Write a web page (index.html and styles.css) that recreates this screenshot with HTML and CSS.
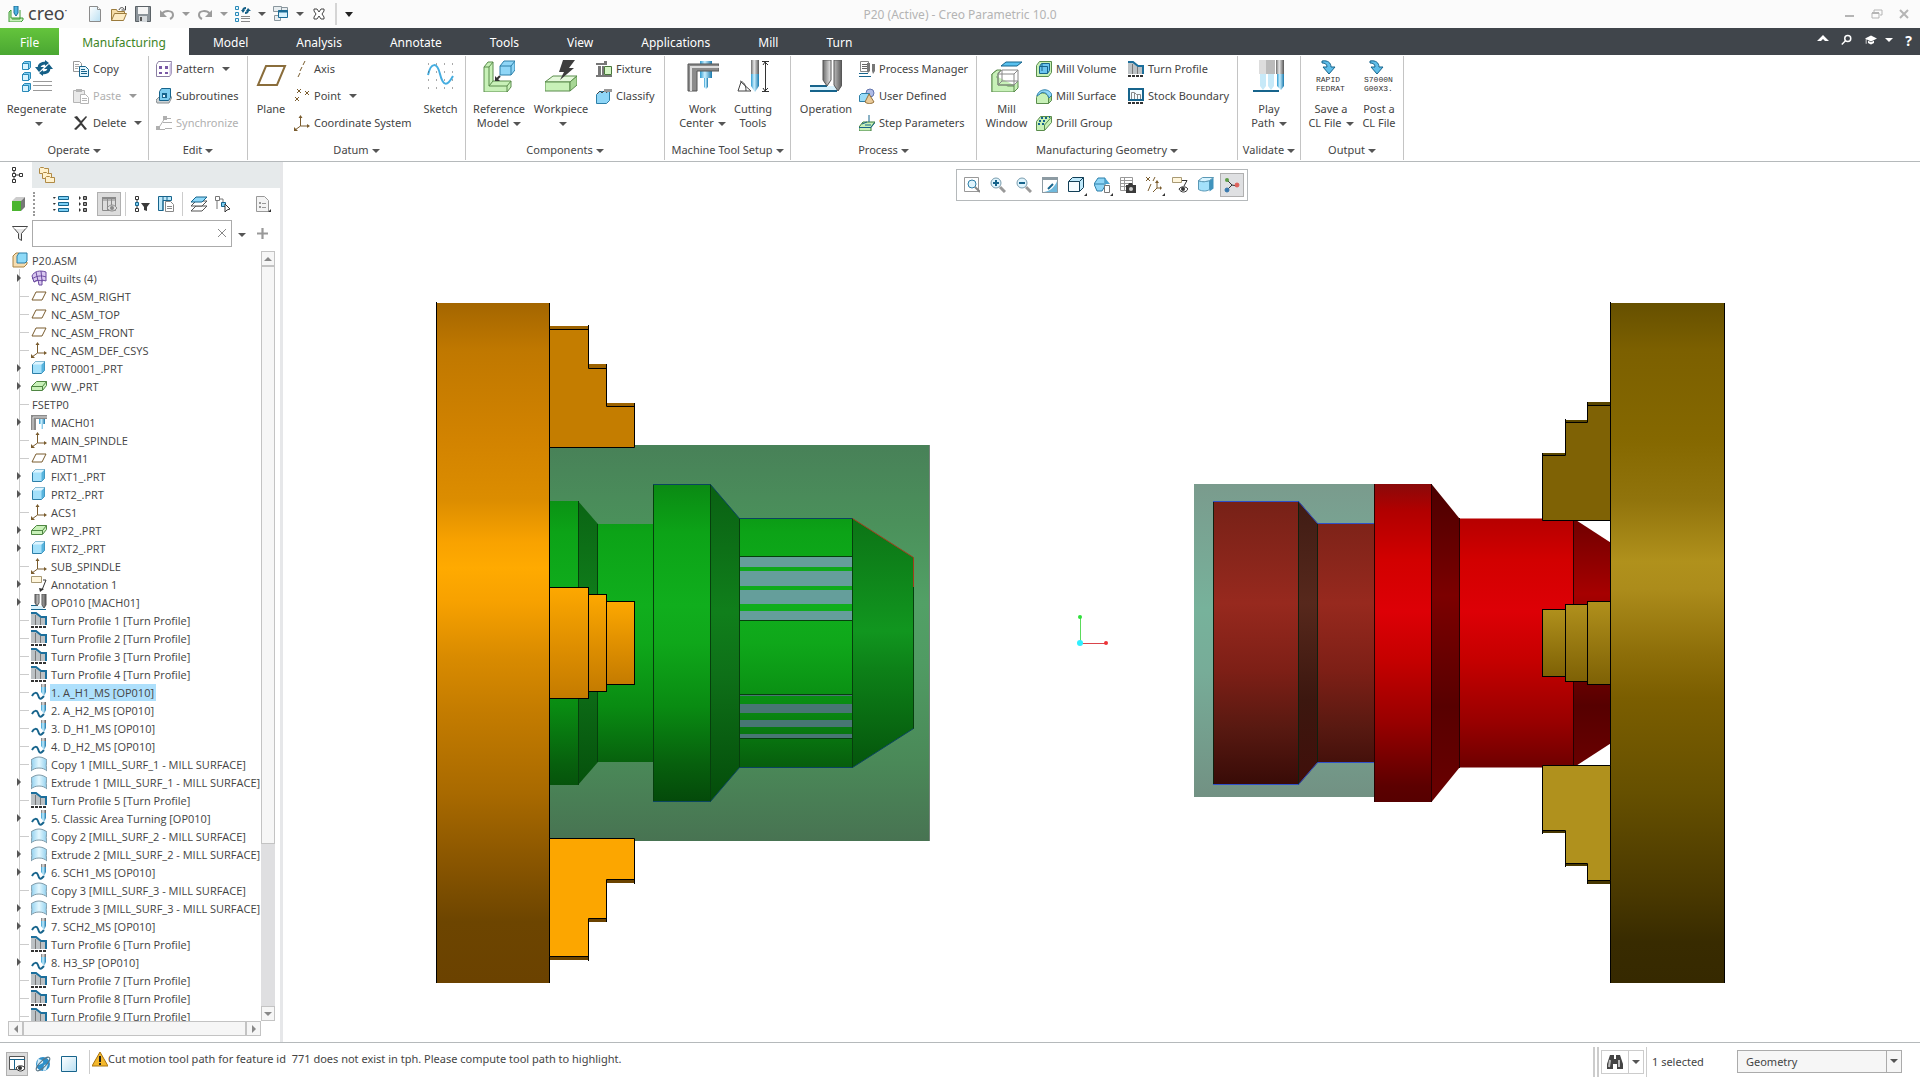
FILE: index.html
```
<!DOCTYPE html>
<html lang="en">

<head>
    <meta charset="UTF-8">
    <meta name="viewport" content="width=device-width, initial-scale=1.0">
    <title>P20 (Active) - Creo Parametric 10.0</title>
    <link rel="stylesheet" href="styles.css">
</head>

<body>
    <!-- icon sprite -->
    <svg class="sprite" aria-hidden="true">
        <defs>
            <linearGradient id="steel"><stop offset="0" stop-color="#6d6d6d"/><stop offset=".4" stop-color="#e6e6e6"/><stop offset="1" stop-color="#555"/></linearGradient>
            <linearGradient id="blue"><stop offset="0" stop-color="#2f9bd0"/><stop offset=".4" stop-color="#c9efff"/><stop offset="1" stop-color="#1878ac"/></linearGradient>
            <linearGradient id="sheet" x2="1" y2="1"><stop offset="0" stop-color="#fff"/><stop offset="1" stop-color="#b9dff2"/></linearGradient>
            <linearGradient id="surf"><stop offset="0" stop-color="#8fcfee"/><stop offset=".5" stop-color="#e4f8ff"/><stop offset="1" stop-color="#8fcfee"/></linearGradient>
        </defs>

        <symbol id="i-logo" viewBox="0 0 16 16"><path d="M1 6l2-2v8h12v2l-2 2H1z" fill="#c9f0bb" stroke="#3c9a35"/><path d="M6 0h4v7l-2 3-2-3z" fill="#4db3e0" stroke="#1c6c96"/><path d="M4 13h8V4" fill="none" stroke="#3c9a35"/></symbol>
        <symbol id="i-new" viewBox="0 0 16 16"><path d="M2.500 .5h8l3 3v12h-11z" fill="url(#sheet)" stroke="#8b8b8b"/><path d="M10.500 .5v3h3" fill="#fff" stroke="#8b8b8b"/></symbol>
        <symbol id="i-open" viewBox="0 0 16 16"><path d="M.5 14.500v-11h5l1 2h7v2" fill="#f5dca6" stroke="#9b7b3c"/><path d="M.5 14.500l3-7h12l-3 7z" fill="#fcebc3" stroke="#9b7b3c"/><path d="M8 4c1-3 4-3 5-1M14.500 0v4h-4" fill="none" stroke="#444"/></symbol>
        <symbol id="i-save" viewBox="0 0 16 16"><path d="M.5.5h15v15h-15z" fill="#8c949a" stroke="#5b6267"/><path d="M3 1h10v7H3z" fill="#f5f5f5"/><path d="M4 10h8v6H4z" fill="#d6dadd"/><path d="M5 11h2v4H5z" fill="#555"/></symbol>
        <symbol id="i-undo" viewBox="0 0 16 16"><path d="M3 8c3-4 11-4 11 1 0 2-1 3-3 4" fill="none" stroke="#9c9c9c" stroke-width="2"/><path d="M1 4v7h7z" fill="#9c9c9c"/></symbol>
        <symbol id="i-redo" viewBox="0 0 16 16"><path d="M13 8C10 4 2 4 2 9c0 2 1 3 3 4" fill="none" stroke="#9c9c9c" stroke-width="2"/><path d="M15 4v7H8z" fill="#9c9c9c"/></symbol>
        <symbol id="i-regen" viewBox="0 0 32 32"><g fill="#d9f4ff" stroke="#2a8ab8"><path d="M1.500 3.500h6v6h-6zM1.500 14.500h6v6h-6zM1.500 25.500h6v6h-6z"/><path d="M1.500 3.500l2-2h6v6l-2 2v-6zM1.500 14.500l2-2h6v6l-2 2v-6zM1.500 25.500l2-2h6v6l-2 2v-6z" fill="#7fcdf0"/></g><path d="M18 8c0-4 3-5 7-5M28 8c0 4-3 5-7 5" fill="none" stroke="#155f86" stroke-width="3"/><path d="M14 7h9l-5 5zM23 9h9l-4-5z" fill="#155f86"/><path d="M24 0v6l4-3zM22 10v6l-4-3z" fill="#155f86"/><path d="M12 21.500h19M12 25.500h19M12 30.500h19" stroke="#999"/></symbol>
        <symbol id="i-regen-s" viewBox="0 0 16 16"><path d="M.5.5h3v3h-3zM.5 6.500h3v3h-3zM.5 12.500h3v3h-3z" fill="#e4f7ff" stroke="#2a8ab8"/><path d="M8 5c0-2 1-3 3-3M13 4c0 2-1 3-3 3" fill="none" stroke="#155f86" stroke-width="2"/><path d="M6 4h4L8 7zM11 5h5l-3-3z" fill="#155f86"/><path d="M6 10.500h9M6 12.500h9M6 15.500h9" stroke="#888"/></symbol>
        <symbol id="i-windows" viewBox="0 0 16 16"><path d="M.5.5h8v5h-8zM1.500 9.500h6v5h-6zM8.500 1.500h6v4h-6z" fill="#e8eef1" stroke="#8a979e"/><path d="M5.500 4.500h9v7h-9z" fill="#d9f2fd" stroke="#1b6c96"/><path d="M5 5.500h10" stroke="#1b6c96" stroke-width="2"/></symbol>
        <symbol id="i-closewin" viewBox="0 0 16 16"><path d="M3 3h3l2 3 2-3h3v2l-2 3 2 3v2h-3l-2-3-2 3H3v-2l2-3-2-3z" fill="#fff" stroke="#444"/></symbol>

        <symbol id="i-copy" viewBox="0 0 16 16"><path d="M.5.5h6l2 2v8h-8z" fill="#fff" stroke="#999"/><path d="M2 3.500h4M2 5.500h4M2 7.500h3" stroke="#aaa"/><path d="M6.500 5.500h6l3 3v7h-9z" fill="#e2f5fd" stroke="#17648c"/><path d="M8 8.500h4M8 10.500h6M8 12.500h6" stroke="#17648c"/></symbol>
        <symbol id="i-paste" viewBox="0 0 16 16"><path d="M.5 2.500h11v12h-11z" fill="#e9e9e9" stroke="#b5b5b5"/><path d="M3 1h6v3H3z" fill="#b5b5b5"/><path d="M7.500 6.500h5l3 3v6h-8z" fill="#fff" stroke="#b5b5b5"/><path d="M9 10.500h5M9 12.500h5" stroke="#b5b5b5"/></symbol>
        <symbol id="i-delete" viewBox="0 0 16 16"><path d="M1 2l3-1 4 5 5-5 1 1-5 6 5 6-2 1-4-5-5 5-2-1 6-6z" fill="#3a3a3a"/></symbol>
        <symbol id="i-pattern" viewBox="0 0 16 16"><path d="M.5 3.500l2-3h13v12l-2 3H.5z" fill="#fff" stroke="#8b7fa3"/><path d="M13.500 3.500v11l2-2v-12z" fill="#c9bede"/><path d="M3 5h3v3H3zM9 5h3v3H9zM3 11h3v2H3zM9 11h3v2H9z" fill="#7a58a6"/></symbol>
        <symbol id="i-subr" viewBox="0 0 16 16"><path d="M0 12l3-3h13l-3 6H1z" fill="#cdd3d6" stroke="#8a8f92"/><path d="M3.500 3.500l2-3h9v9l-2 3h-9z" fill="#7ccdf0" stroke="#17648c"/><path d="M6 5h5v5H6z" fill="#17648c"/><path d="M7 7h2v2H7z" fill="#dff5ff"/></symbol>
        <symbol id="i-sync" viewBox="0 0 16 16"><path d="M2 14L9 3M1 14.500h8M7 7.500h9M9 3.500h6M9 13.500h7" fill="none" stroke="#b0b0b0"/><path d="M7 1h4v4H7zM0 11h4v4H0z" fill="#b0b0b0"/></symbol>
        <symbol id="i-plane-l" viewBox="0 0 32 32"><path d="M11 6h19l-8 19H3z" fill="#fff" stroke="#8a6d3b" stroke-width="2"/></symbol>
        <symbol id="i-plane" viewBox="0 0 16 16"><path d="M5 4h10l-4 8H1z" fill="#fff" stroke="#7a5c2e"/></symbol>
        <symbol id="i-axis" viewBox="0 0 16 16"><path d="M11 0L9 4M8 6L6 10M6 12L4 16" stroke="#7a5c2e"/></symbol>
        <symbol id="i-point" viewBox="0 0 16 16"><path d="M3 1l4 4M7 1L3 5M11 3l4 4M15 3l-4 4M1 9l4 4M5 9l-4 4" stroke="#7a5c2e"/></symbol>
        <symbol id="i-csys" viewBox="0 0 16 16"><path d="M6.500 2v9h8M6.500 11L1 15" fill="none" stroke="#7a5c2e"/><path d="M4.500 3l2-3 2 3zM13 9l3 2-3 2zM0 12v4h4z" fill="#7a5c2e"/></symbol>
        <symbol id="i-sketch" viewBox="0 0 32 32"><path d="M3 15C6 2 12 2 15 14s7 13 13 2" fill="none" stroke="#45ade0" stroke-width="2"/><path d="M3 4h26M3 12h26M3 20h26M3 28h26" stroke="#555" stroke-dasharray="1 7"/></symbol>
        <symbol id="i-refmodel" viewBox="0 0 32 32"><path d="M1 7l4-5h5v19h18v6l-4 5H1z" fill="#c8f1b8" stroke="#5a8c4c"/><path d="M1 7h5v19h18v6M6 7l4-5M6 26l4-5M24 26l4-5" fill="none" stroke="#5a8c4c"/><path d="M17 6l4-5h11v9l-4 5H17z" fill="#8fd6f7" stroke="#2d7fa8"/><path d="M17 6h11v9M28 6l4-5" fill="none" stroke="#2d7fa8"/><path d="M17 16l-4 4" stroke="#333" stroke-width="2"/><path d="M12 16v5h5z" fill="#333"/></symbol>
        <symbol id="i-workpiece" viewBox="0 0 32 32"><path d="M0 22l8-6h24l-7 6z" fill="#e4f8da" stroke="#5a8c4c"/><path d="M0 22h25v9H0z" fill="#c8f1b8" stroke="#5a8c4c"/><path d="M25 22l7-6v9l-7 6z" fill="#a7d795" stroke="#5a8c4c"/><path d="M18 0h12l-6 8h5L15 20l4-8h-5z" fill="#3d3d3d"/></symbol>
        <symbol id="i-fixture" viewBox="0 0 16 16"><path d="M0 2h8V0h3v4H0zM2 5h3v9H2zM6 5h2v9H6zM0 14h16v2H0z" fill="#777"/><path d="M8.500 5.500h7v8h-7z" fill="#d3f4c4" stroke="#48773c"/></symbol>
        <symbol id="i-classify" viewBox="0 0 16 16"><path d="M.5 6.500l3-3h10v9l-3 3h-10z" fill="#8fd6f7" stroke="#2d7fa8"/><path d="M1 6l3-3 2 2 3-3 2 3" fill="none" stroke="#444"/><path d="M8 1h8v3H8z" fill="#999"/></symbol>
        <symbol id="i-machine" viewBox="0 0 32 32"><path d="M13 1h12v17H13z" fill="url(#blue)"/><path d="M17 18h4v9l-2 2-2-2z" fill="url(#blue)"/><path d="M1 4h31v7H10v20H1z" fill="#8b8b8b" stroke="#555"/><path d="M4 31V7h28" fill="none" stroke="#ddd" stroke-width="2"/></symbol>
        <symbol id="i-machine-s" viewBox="0 0 16 16"><path d="M8 1h6v9H8zM10 10h2v5h-2z" fill="url(#blue)"/><path d="M0 1h16v4H5v11H0z" fill="#8a8a8a"/><path d="M2 16V3h14" fill="none" stroke="#ddd"/></symbol>
        <symbol id="i-cutting" viewBox="0 0 32 32"><path d="M14 0h8v14h-8z" fill="url(#steel)"/><path d="M14 14h8v12l-4 6-4-6z" fill="url(#blue)"/><path d="M28.500 2v28M25 1.500h7M25 31.500h7M26 5l2-3 3 3M26 28l2 3 3-3" fill="none" stroke="#333"/><path d="M1 31h13L4 22zM3 21c4 1 6 4 6 10" fill="none" stroke="#444"/></symbol>
        <symbol id="i-operation" viewBox="0 0 32 32"><path d="M0 26h27v5H0z" fill="#d8f2fd"/><path d="M0 26h17M0 31h27" stroke="#17648c" stroke-width="2"/><path d="M13 0h8v20l-4 6-4-6zM24 0h8v25l-4 6-4-6z" fill="url(#steel)" stroke="#555"/></symbol>
        <symbol id="i-operation-s" viewBox="0 0 16 16"><path d="M0 12h12v3H0z" fill="#d8f2fd"/><path d="M0 11.500h7M0 15.500h15" stroke="#17648c"/><path d="M4 0h4v9l-2 3-2-3zM11 0h4v11l-2 3-2-3z" fill="url(#steel)" stroke="#555"/></symbol>
        <symbol id="i-procman" viewBox="0 0 16 16"><path d="M1.500.5h8v10h-8z" fill="#fff" stroke="#888"/><path d="M3 3.500h5M3 5.500h5M3 7.500h5" stroke="#666"/><path d="M8 2h3v8l-2 2-1-2zM13 3h3v7l-2 3-1-3z" fill="#777"/><path d="M0 12.500h9M0 15.500h12" stroke="#17648c"/></symbol>
        <symbol id="i-userdef" viewBox="0 0 16 16"><circle cx="11" cy="5" r="4" fill="#aebbe6" stroke="#6375ad"/><path d="M.5 7.500l2-2h8v6l-2 2h-8z" fill="#9adcf8" stroke="#2d7fa8"/><path d="M10 6l5 8c-2 2-7 2-9 0z" fill="#eacb9a" stroke="#94713b"/></symbol>
        <symbol id="i-step" viewBox="0 0 16 16"><path d="M0 12l4-5h12l-4 5v4H0z" fill="#c8f1b8" stroke="#3b7b3b"/><path d="M0 12.500h12l4-5" fill="none" stroke="#17648c"/><path d="M10 0v7M3 9l5-2M6 10h6" stroke="#17648c"/></symbol>
        <symbol id="i-millwin" viewBox="0 0 32 32"><path d="M15 2h16l-5 4H10z" fill="#58c0ee" stroke="#17648c"/><path d="M1 14l5-4v16h21l-4 6H1z" fill="#c8f1b8" stroke="#5a8c4c"/><path d="M1 14v18h22v-7l4-4v7l-4 4M1 14l5-4h4l-3 4v11h16" fill="#c8f1b8" stroke="#5a8c4c"/><path d="M7 13l4-3h16v11l-4 4H7zM11 10v11h16M7 14h16v11M23 14l4-4M7 25l4-4" fill="none" stroke="#888"/></symbol>
        <symbol id="i-millvol" viewBox="0 0 16 16"><path d="M.5 4.500l3-4h12v11l-3 4H.5z" fill="#c8f1b8" stroke="#5a8c4c"/><path d="M3.500 5.500l2-3h8v7l-2 3h-8z" fill="#6bc5ef" stroke="#17648c"/><path d="M3.500 5.500h8v7M6 3v7" fill="none" stroke="#17648c"/></symbol>
        <symbol id="i-millsurf" viewBox="0 0 16 16"><path d="M.5 15.500v-6c1-6 11-6 12 0v6z" fill="#c8f1b8" stroke="#5a8c4c"/><path d="M12.500 15.500l3-3v-6l-3 2z" fill="#a7d795" stroke="#5a8c4c"/><path d="M1 8c1-7 12-9 15-1l-3 3C11 4 6 3 4 6z" fill="#8fd6f7" stroke="#2d7fa8"/></symbol>
        <symbol id="i-drill" viewBox="0 0 16 16"><path d="M.5 6.500l4-5h11v6l-7 8h-8z" fill="#c8f1b8" stroke="#5a8c4c"/><path d="M8.500 15v-5l7-8" fill="none" stroke="#5a8c4c"/><path d="M5 3h2M9 3h2M13 2h1M3 6h2M7 6h2M2 9h2M6 9h2" stroke="#17648c" stroke-width="2"/></symbol>
        <symbol id="i-turnprof" viewBox="0 0 16 16"><path d="M0 1h5l5 4h5v8H0z" fill="#bcc1c4"/><path d="M0 1h5l5 4h5v8" fill="none" stroke="#1c6f9c" stroke-width="2"/><path d="M4.500 3v10M9.500 6v7" stroke="#777"/><path d="M0 15h16" stroke="#333" stroke-width="2" stroke-dasharray="3 1"/></symbol>
        <symbol id="i-stock" viewBox="0 0 16 16"><path d="M1 1h14v11H1z" fill="#f2fbff" stroke="#17648c" stroke-width="2"/><path d="M3.500 11V4.500h3l2 2h4V11M6.500 5v6M9.500 7v4" fill="none" stroke="#888"/><path d="M0 15h16" stroke="#333" stroke-width="2" stroke-dasharray="3 1"/></symbol>
        <symbol id="i-play" viewBox="0 0 32 32"><path d="M6 0h7v14H6z" fill="#ddd"/><path d="M13 0h9v14h-9z" fill="#bbb"/><path d="M23 0h8v14h-8z" fill="url(#steel)"/><path d="M7 14h6v12l-3 4-3-4zM15 14h6v12l-3 4-3-4z" fill="#c7e9f8"/><path d="M24 14h7v12l-3 4-4-4z" fill="url(#blue)"/><path d="M0 31h26" stroke="#17648c" stroke-width="2"/></symbol>
        <symbol id="i-down" viewBox="0 0 16 16"><path d="M1 1c6-1 9 2 9 6h4l-6 7-6-7h4c0-3-2-4-5-4z" fill="#5fbde8" stroke="#17648c"/></symbol>

        <symbol id="i-tree" viewBox="0 0 16 16"><path d="M2.500.5h3v3h-3zM2.500 6.500h3v3h-3zM2.500 12.500h3v3h-3zM9.500 6.500h3v3h-3zM6 8h3M4 4v2M4 10v2" fill="none" stroke="#333"/></symbol>
        <symbol id="i-folders" viewBox="0 0 16 16"><g fill="#fff1cc" stroke="#b08a45"><path d="M.5 1.500l1-1h3l1 1h4v5h-9z"/><path d="M3.500 6.500l1-1h3l1 1h4v5h-9z"/><path d="M6.500 10.500l1-1h3l1 1h4v5h-9z"/></g></symbol>
        <symbol id="i-cube" viewBox="0 0 16 16"><path d="M1 5h9v10H1z" fill="#4bb52f"/><path d="M1 5l4-4h9l-4 4z" fill="#ccc"/><path d="M10 5l4-4v10l-4 4z" fill="#777"/></symbol>
        <symbol id="i-list" viewBox="0 0 16 16"><path d="M5.500.5h10v3h-10zM5.500 6.500h10v3h-10zM5.500 12.500h10v3h-10z" fill="#7cd0f5" stroke="#17648c"/><path d="M0 1h3L1 3zM0 7h3l-2 2zM0 13h3l-2 2z" fill="#333"/></symbol>
        <symbol id="i-list2" viewBox="0 0 16 16"><path d="M6.500.5h3v3h-3zM6.500 6.500h3v3h-3zM6.500 12.500h3v3h-3z" fill="#999" stroke="#333"/><path d="M2 0v4l2-2zM2 6v4l2-2zM2 12v4l2-2z" fill="#333"/></symbol>
        <symbol id="i-cols" viewBox="0 0 16 16"><path d="M1.500 1.500h13v13h-13zM2 4h12M6.500 2v13M10.500 2v13" fill="none" stroke="#8a8a8a"/><path d="M1 1h14v2H1z" fill="#8a8a8a"/><path d="M6 12c3-4 7-4 10 0-3 4-7 4-10 0z" fill="#ddd" stroke="#8a8a8a"/><circle cx="11" cy="12" r="2" fill="#8a8a8a"/></symbol>
        <symbol id="i-treefilter" viewBox="0 0 16 16"><path d="M1.500.5h3v3h-3zM1.500 12.500h3v3h-3zM3 4v8" fill="none" stroke="#333"/><path d="M1.500 6.500h3v3h-3z" fill="#7cd0f5" stroke="#17648c"/><path d="M7 7h9l-3 4v4l-3-1v-3z" fill="#3a3a3a"/></symbol>
        <symbol id="i-treecols" viewBox="0 0 16 16"><path d="M.5.5h13v4H5v10H.5zM5 1v14M9 1v4" fill="#bfe9fb" stroke="#17648c"/><path d="M7.500 5.500h5l3 3v7h-8z" fill="#fff" stroke="#888"/><path d="M9 10.500h5M9 12.500h5" stroke="#888"/></symbol>
        <symbol id="i-layers" viewBox="0 0 16 16"><g stroke="#555"><path d="M0 15l5-5h11l-5 5z" fill="#fff"/><path d="M0 10l5-5h11l-5 5z" fill="#fff"/><path d="M0 6l5-5h11l-5 5z" fill="#8fd8f8" stroke="#17648c"/></g></symbol>
        <symbol id="i-treesel" viewBox="0 0 16 16"><path d="M.5.5h4v4h-4zM2 5v8M5 3h3v4" fill="none" stroke="#777"/><path d="M6.500 6.500h4v4h-4z" fill="#7cd0f5" stroke="#17648c"/><path d="M10 8v8l2-2 3-1z" fill="#fff" stroke="#333"/></symbol>
        <symbol id="i-settings" viewBox="0 0 16 16"><path d="M1.500.5h8l4 4v11h-12z" fill="#f4f4f4" stroke="#999"/><path d="M7 7.500h4M7 11.500h4" stroke="#999"/><circle cx="5" cy="7" r="1" fill="#777"/><circle cx="5" cy="11" r="1" fill="#777"/><path d="M16 13v3h-3z" fill="#333"/></symbol>
        <symbol id="i-funnel" viewBox="0 0 16 16"><path d="M.5 1.500h15l-6 7v7l-3-2v-5z" fill="#e8e8e8" stroke="#444"/><path d="M1 2h14l-2 2H3z" fill="#fff"/></symbol>

        <symbol id="i-asm" viewBox="0 0 16 16"><path d="M1 4l3-3h3v9h8v2l-3 3H1z" fill="#f6ddb0" stroke="#a98345"/><path d="M5 4l2-3h8v8l-2 2H5z" fill="#8edaf8" stroke="#2d7fa8"/></symbol>
        <symbol id="i-quilt" viewBox="0 0 16 16"><path d="M1 6c2-5 8-6 14-4v9l-4-1v5H8l-1-5-4 2z" fill="#d9c8f0" stroke="#6b4aa0"/><path d="M1 9c4-3 9-4 14-2M5 2l2 9M10 1l1 10M3 12c2-2 5-2 9-1" fill="none" stroke="#6b4aa0"/></symbol>
        <symbol id="i-part" viewBox="0 0 16 16"><path d="M1.500 4.500l3-3h9v9l-3 3h-9z" fill="#a4e1fb" stroke="#2d7fa8"/><path d="M10.500 4.500l3-3v9l-3 3z" fill="#58b4dd"/><path d="M1.500 4.500l3-3h9l-3 3z" fill="#def5ff"/></symbol>
        <symbol id="i-wp" viewBox="0 0 16 16"><path d="M.5 8.500l5-5h10v4l-4 5H.5z" fill="#c8f1b8" stroke="#4f8643"/><path d="M.5 8.500h11l4-5M11.500 8v4" fill="none" stroke="#4f8643"/></symbol>
        <symbol id="i-annot" viewBox="0 0 16 16"><path d="M.5.5h10v6H.5z" fill="#fff6dd" stroke="#a99a74"/><path d="M12 4h3l-4 10" fill="none" stroke="#333"/><path d="M8 12l5 1-4 3z" fill="#333"/></symbol>
        <symbol id="i-seq" viewBox="0 0 16 16"><path d="M1 12c2-4 5-4 6-1s2 5 4 3l2-2" fill="none" stroke="#17648c" stroke-width="2"/><path d="M10 0h5v8l-2 4-3-4z" fill="url(#blue)"/><path d="M10 0h5v3h-5z" fill="url(#steel)"/></symbol>
        <symbol id="i-surf" viewBox="0 0 16 16"><path d="M0 4C5 0 11 0 16 4c-1 4-1 7 0 11-4-4-12-4-16 0 1-4 1-7 0-11z" fill="url(#surf)" stroke="#7f9aa8"/></symbol>

        <symbol id="i-zoomfit" viewBox="0 0 16 16"><path d="M.5.5h14v14H.5z" fill="#fff" stroke="#999"/><circle cx="8" cy="7" r="4" fill="#dff4fd" stroke="#2d7fa8"/><path d="M11 10l5 5" stroke="#888" stroke-width="2"/></symbol>
        <symbol id="i-zoomin" viewBox="0 0 16 16"><circle cx="6" cy="6" r="5" fill="#dff4fd" stroke="#7a9cad"/><path d="M3 6h6M6 3v6" stroke="#17648c" stroke-width="2"/><path d="M10 10l5 5" stroke="#999" stroke-width="3"/></symbol>
        <symbol id="i-zoomout" viewBox="0 0 16 16"><circle cx="6" cy="6" r="5" fill="#dff4fd" stroke="#7a9cad"/><path d="M3 6h6" stroke="#17648c" stroke-width="2"/><path d="M10 10l5 5" stroke="#999" stroke-width="3"/></symbol>
        <symbol id="i-repaint" viewBox="0 0 16 16"><path d="M0 0h16v16H0z" fill="#8d9ba3"/><path d="M1 3h14v12H1z" fill="#fff"/><path d="M15 4v11H2c6-1 11-5 13-11z" fill="#6fb9dc"/><path d="M6 12l5-5" stroke="#17648c" stroke-width="2"/></symbol>
        <symbol id="i-display" viewBox="0 0 16 16"><path d="M.5 4.500l4-4h11v10l-4 4H.5z" fill="#bfe9fb" stroke="#123f57"/><path d="M.5 4.500h11v10" fill="#fff" stroke="#123f57"/><path d="M1 5h10v9H1z" fill="#f3fbff"/><path d="M11.500 4.500l4-4" stroke="#123f57"/></symbol>
        <symbol id="i-orient" viewBox="0 0 16 16"><path d="M0 7l4-6h7v8L8 14H3z" fill="#8fd6f7" stroke="#2d7fa8"/><path d="M0 7h10" stroke="#2d7fa8"/><path d="M11 1l5 6h-5z" fill="#4aa3cf"/><path d="M10.500 8.500h5v7h-5z" fill="#fff" stroke="#777"/></symbol>
        <symbol id="i-views" viewBox="0 0 16 16"><path d="M.5.5h12v13H.5zM1 3.500h11M1 6.500h11M1 9.500h11M4.500 1v12" fill="#fff" stroke="#999"/><path d="M6 8h2l1-2h3l1 2h3v8H6z" fill="#3a3a3a"/><circle cx="11" cy="12" r="2" fill="#ccc"/></symbol>
        <symbol id="i-datum" viewBox="0 0 16 16"><path d="M0 0l4 4M4 0L0 4M9 0L7 4M5 7l-3 7M11 5v6h4M11 11l-4 4" fill="none" stroke="#7a5c2e"/><path d="M9 6l2-3 2 3zM14 9l2 2-2 2z" fill="#7a5c2e"/></symbol>
        <symbol id="i-annodisp" viewBox="0 0 16 16"><path d="M.5.5h9v5h-9z" fill="#fff6dd" stroke="#a99a74"/><path d="M10 3.500h5L12 9" fill="none" stroke="#333"/><path d="M7 12c2-3 7-3 9 0-2 4-7 4-9 0z" fill="#fff" stroke="#333"/><circle cx="11" cy="12" r="2" fill="#333"/></symbol>
        <symbol id="i-section" viewBox="0 0 16 16"><path d="M.5 3.500c4 2 8 1 11 0v9c-3 2-7 2-11 0z" fill="#a4e1fb" stroke="#5b98b5"/><path d="M11.500 3.500l4-3v11l-4 3z" fill="#3f93bd"/><path d="M.5 3.500l4-3h11l-4 3c-3 1-7 2-11 0z" fill="#d8f4ff" stroke="#5b98b5"/></symbol>
        <symbol id="i-spin" viewBox="0 0 16 16"><path d="M3 3l5 5 5 1M8 8l-5 5" fill="none" stroke="#333"/><circle cx="3" cy="3" r="2" fill="#5b9c46"/><circle cx="13" cy="8" r="2" fill="#e0625b" stroke="#e0625b"/><circle cx="3" cy="13" r="2" fill="#3878ad" stroke="#3878ad"/></symbol>

        <symbol id="i-panel" viewBox="0 0 16 16"><path d="M.5.5h15v13H.5z" fill="#fff" stroke="#555"/><path d="M1 3.500h15M5.500 3v11" stroke="#17648c"/><path d="M7 12c2-3 7-3 9 0-2 4-7 4-9 0z" fill="#fff" stroke="#333"/><circle cx="11" cy="12" r="2" fill="#333"/></symbol>
        <symbol id="i-globe" viewBox="0 0 16 16"><circle cx="8" cy="8" r="7" fill="#2e8fc9"/><path d="M3 3c3 1 6 0 5 4l-4 2-2 0zM9 9l4-1-2 6-3 1z" fill="#d5effc"/><ellipse cx="8" cy="8" rx="9" ry="3" transform="rotate(-45 8 8)" fill="none" stroke="#5b7787"/></symbol>
        <symbol id="i-box" viewBox="0 0 16 16"><path d="M.5.5h15v15H.5z" fill="url(#sheet)" stroke="#17648c"/></symbol>
        <symbol id="i-warn" viewBox="0 0 16 16"><path d="M8 1l8 14H0z" fill="#f4b82b" stroke="#a87412"/><path d="M7 5h2v6H7zM7 12h2v2H7z" fill="#222"/></symbol>
        <symbol id="i-binoc" viewBox="0 0 16 16"><path d="M3 1h4v4h2V1h4l3 9v5h-6v-5H6v5H0v-5z" fill="#444"/><path d="M3 6L2 13M12 6v7" stroke="#bbb" stroke-width="2"/></symbol>
        <symbol id="i-search" viewBox="0 0 16 16"><circle cx="9" cy="6" r="4" fill="none" stroke="#fff" stroke-width="2"/><path d="M6 9l-5 5" stroke="#fff" stroke-width="2"/></symbol>
        <symbol id="i-hat" viewBox="0 0 16 16"><path d="M8 2l8 4-8 4-8-4zM4 9l4 2 4-2v3l-4 2-4-2zM1 7h1v6H1z" fill="#fff"/></symbol>
    </svg>

    <header class="titlebar">
        <div class="quick">
            <div class="logo"><svg class="ico"><use href="#i-logo"/></svg><span>creo<sup>•</sup></span></div>
            <button aria-label="New"><svg class="ico"><use href="#i-new"/></svg></button>
            <button aria-label="Open"><svg class="ico"><use href="#i-open"/></svg></button>
            <button aria-label="Save"><svg class="ico"><use href="#i-save"/></svg></button>
            <button class="drop dim" aria-label="Undo"><svg class="ico"><use href="#i-undo"/></svg><i class="caret"></i></button>
            <button class="drop dim" aria-label="Redo"><svg class="ico"><use href="#i-redo"/></svg><i class="caret"></i></button>
            <button class="drop" aria-label="Regenerate"><svg class="ico"><use href="#i-regen-s"/></svg><i class="caret"></i></button>
            <button class="drop" aria-label="Windows"><svg class="ico"><use href="#i-windows"/></svg><i class="caret"></i></button>
            <button aria-label="Close window"><svg class="ico"><use href="#i-closewin"/></svg></button>
            <button class="customize" aria-label="Customize"><i class="caret"></i></button>
        </div>
        <h1 class="title">P20 (Active) - Creo Parametric 10.0</h1>
        <div class="window-btns">
            <button aria-label="Minimize"><svg class="ico-s" viewBox="0 0 12 12"><path d="M1 8h9" stroke="#b5b5b5" stroke-width="2"/></svg></button>
            <button aria-label="Restore"><svg class="ico-s" viewBox="0 0 12 12"><path d="M3 4V2h8v5H9M1 5h7v5H1z" fill="none" stroke="#b5b5b5"/><path d="M1 5h7" stroke="#b5b5b5" stroke-width="2"/></svg></button>
            <button aria-label="Close"><svg class="ico-s" viewBox="0 0 12 12"><path d="M2 2l8 8M10 2l-8 8" stroke="#b5b5b5" stroke-width="2"/></svg></button>
        </div>
    </header>

    <nav class="tabs">
        <a href="#" class="file">File</a>
        <a href="#" class="active">Manufacturing</a>
        <a href="#">Model</a>
        <a href="#">Analysis</a>
        <a href="#">Annotate</a>
        <a href="#">Tools</a>
        <a href="#">View</a>
        <a href="#">Applications</a>
        <a href="#">Mill</a>
        <a href="#">Turn</a>
        <div class="tab-tools">
            <button aria-label="Minimize ribbon"><svg class="ico-s" viewBox="0 0 12 12"><path d="M6 1l6 6H8L6 5 4 7H0z" fill="#fff"/></svg></button>
            <button aria-label="Search"><svg class="ico-s"><use href="#i-search"/></svg></button>
            <button class="learn" aria-label="Learning"><svg class="ico-s"><use href="#i-hat"/></svg><i class="caret"></i></button>
            <button class="help" aria-label="Help">?</button>
        </div>
    </nav>

    <section class="ribbon">
        <div class="group operate">
            <div class="cols">
                <button class="big"><svg><use href="#i-regen"/></svg><span>Regenerate<br><i class="caret"></i></span></button>
                <div class="stack">
                    <button class="small"><svg class="ico"><use href="#i-copy"/></svg>Copy</button>
                    <button class="small dim"><svg class="ico"><use href="#i-paste"/></svg>Paste<i class="caret"></i></button>
                    <button class="small"><svg class="ico"><use href="#i-delete"/></svg>Delete<i class="caret"></i></button>
                </div>
            </div>
            <button class="group-name">Operate<i class="caret"></i></button>
        </div>
        <div class="group edit">
            <div class="cols">
                <div class="stack">
                    <button class="small"><svg class="ico"><use href="#i-pattern"/></svg>Pattern<i class="caret"></i></button>
                    <button class="small"><svg class="ico"><use href="#i-subr"/></svg>Subroutines</button>
                    <button class="small dim"><svg class="ico"><use href="#i-sync"/></svg>Synchronize</button>
                </div>
            </div>
            <button class="group-name">Edit<i class="caret"></i></button>
        </div>
        <div class="group datum">
            <div class="cols">
                <button class="big"><svg><use href="#i-plane-l"/></svg><span>Plane</span></button>
                <div class="stack">
                    <button class="small"><svg class="ico"><use href="#i-axis"/></svg>Axis</button>
                    <button class="small"><svg class="ico"><use href="#i-point"/></svg>Point<i class="caret"></i></button>
                    <button class="small"><svg class="ico"><use href="#i-csys"/></svg>Coordinate System</button>
                </div>
                <button class="big"><svg><use href="#i-sketch"/></svg><span>Sketch</span></button>
            </div>
            <button class="group-name">Datum<i class="caret"></i></button>
        </div>
        <div class="group components">
            <div class="cols">
                <button class="big"><svg><use href="#i-refmodel"/></svg><span>Reference<br>Model<i class="caret"></i></span></button>
                <button class="big"><svg><use href="#i-workpiece"/></svg><span>Workpiece<br><i class="caret"></i></span></button>
                <div class="stack">
                    <button class="small"><svg class="ico"><use href="#i-fixture"/></svg>Fixture</button>
                    <button class="small"><svg class="ico"><use href="#i-classify"/></svg>Classify</button>
                </div>
            </div>
            <button class="group-name">Components<i class="caret"></i></button>
        </div>
        <div class="group setup">
            <div class="cols">
                <button class="big"><svg><use href="#i-machine"/></svg><span>Work<br>Center<i class="caret"></i></span></button>
                <button class="big"><svg><use href="#i-cutting"/></svg><span>Cutting<br>Tools</span></button>
            </div>
            <button class="group-name">Machine Tool Setup<i class="caret"></i></button>
        </div>
        <div class="group process">
            <div class="cols">
                <button class="big"><svg><use href="#i-operation"/></svg><span>Operation</span></button>
                <div class="stack">
                    <button class="small"><svg class="ico"><use href="#i-procman"/></svg>Process Manager</button>
                    <button class="small"><svg class="ico"><use href="#i-userdef"/></svg>User Defined</button>
                    <button class="small"><svg class="ico"><use href="#i-step"/></svg>Step Parameters</button>
                </div>
            </div>
            <button class="group-name">Process<i class="caret"></i></button>
        </div>
        <div class="group geometry">
            <div class="cols">
                <button class="big"><svg><use href="#i-millwin"/></svg><span>Mill<br>Window</span></button>
                <div class="stack">
                    <button class="small"><svg class="ico"><use href="#i-millvol"/></svg>Mill Volume</button>
                    <button class="small"><svg class="ico"><use href="#i-millsurf"/></svg>Mill Surface</button>
                    <button class="small"><svg class="ico"><use href="#i-drill"/></svg>Drill Group</button>
                </div>
                <div class="stack">
                    <button class="small"><svg class="ico"><use href="#i-turnprof"/></svg>Turn Profile</button>
                    <button class="small"><svg class="ico"><use href="#i-stock"/></svg>Stock Boundary</button>
                </div>
            </div>
            <button class="group-name">Manufacturing Geometry<i class="caret"></i></button>
        </div>
        <div class="group validate">
            <div class="cols">
                <button class="big"><svg><use href="#i-play"/></svg><span>Play<br>Path<i class="caret"></i></span></button>
            </div>
            <button class="group-name">Validate<i class="caret"></i></button>
        </div>
        <div class="group output">
            <div class="cols">
                <button class="big"><svg viewBox="0 0 32 32"><use href="#i-down" x="6" width="16" height="16"/><text x="1" y="22" class="code">RAPID</text><text x="1" y="31" class="code">FEDRAT</text></svg><span>Save a<br>CL File<i class="caret"></i></span></button>
                <button class="big"><svg viewBox="0 0 32 32"><use href="#i-down" x="6" width="16" height="16"/><text x="1" y="22" class="code">S7000N</text><text x="1" y="31" class="code">G00X3.</text></svg><span>Post a<br>CL File</span></button>
            </div>
            <button class="group-name">Output<i class="caret"></i></button>
        </div>
    </section>

    <main>
        <aside class="sidebar">
            <div class="side-tabs">
                <button class="active" aria-label="Model Tree"><svg class="ico"><use href="#i-tree"/></svg></button>
                <button aria-label="Folder Browser"><svg class="ico"><use href="#i-folders"/></svg></button>
            </div>
            <div class="side-tools">
                <button class="kind" aria-label="Model"><svg class="ico"><use href="#i-cube"/></svg></button>
                <button aria-label="Expand"><svg class="ico"><use href="#i-list"/></svg></button>
                <button aria-label="Collapse"><svg class="ico"><use href="#i-list2"/></svg></button>
                <button class="on" aria-label="Show columns"><svg class="ico"><use href="#i-cols"/></svg></button>
                <hr>
                <button aria-label="Tree filters"><svg class="ico"><use href="#i-treefilter"/></svg></button>
                <button aria-label="Tree columns"><svg class="ico"><use href="#i-treecols"/></svg></button>
                <hr>
                <button aria-label="Layers"><svg class="ico"><use href="#i-layers"/></svg></button>
                <button aria-label="Select"><svg class="ico"><use href="#i-treesel"/></svg></button>
                <button class="last" aria-label="Settings"><svg class="ico"><use href="#i-settings"/></svg></button>
            </div>
            <div class="filter">
                <svg class="ico"><use href="#i-funnel"/></svg>
                <div class="filter-box">
                    <input type="text" aria-label="Filter the tree">
                    <button aria-label="Clear"><svg viewBox="0 0 8 8"><path d="M0 0l8 8M8 0L0 8" stroke="#888"/></svg></button>
                </div>
                <button class="filter-drop" aria-label="Filter options"><i class="caret"></i></button>
                <button class="filter-add" aria-label="Add filter"><svg viewBox="0 0 10 10"><path d="M5 0v10M0 5h10" stroke="#999" stroke-width="2"/></svg></button>
            </div>
            <div class="tree-area">
                <div class="tree">
                    <div class="root"><svg class="ico"><use href="#i-asm"/></svg>P20.ASM</div>
                    <ul>
                        <li class="more"><svg class="ico"><use href="#i-quilt"/></svg><span>Quilts (4)</span></li>
                        <li><svg class="ico"><use href="#i-plane"/></svg><span>NC_ASM_RIGHT</span></li>
                        <li><svg class="ico"><use href="#i-plane"/></svg><span>NC_ASM_TOP</span></li>
                        <li><svg class="ico"><use href="#i-plane"/></svg><span>NC_ASM_FRONT</span></li>
                        <li><svg class="ico"><use href="#i-csys"/></svg><span>NC_ASM_DEF_CSYS</span></li>
                        <li class="more"><svg class="ico"><use href="#i-part"/></svg><span>PRT0001_.PRT</span></li>
                        <li class="more"><svg class="ico"><use href="#i-wp"/></svg><span>WW_.PRT</span></li>
                        <li class="no-icon"><span>FSETP0</span></li>
                        <li class="more"><svg class="ico"><use href="#i-machine-s"/></svg><span>MACH01</span></li>
                        <li><svg class="ico"><use href="#i-csys"/></svg><span>MAIN_SPINDLE</span></li>
                        <li><svg class="ico"><use href="#i-plane"/></svg><span>ADTM1</span></li>
                        <li class="more"><svg class="ico"><use href="#i-part"/></svg><span>FIXT1_.PRT</span></li>
                        <li class="more"><svg class="ico"><use href="#i-part"/></svg><span>PRT2_.PRT</span></li>
                        <li><svg class="ico"><use href="#i-csys"/></svg><span>ACS1</span></li>
                        <li class="more"><svg class="ico"><use href="#i-wp"/></svg><span>WP2_.PRT</span></li>
                        <li class="more"><svg class="ico"><use href="#i-part"/></svg><span>FIXT2_.PRT</span></li>
                        <li><svg class="ico"><use href="#i-csys"/></svg><span>SUB_SPINDLE</span></li>
                        <li class="more"><svg class="ico"><use href="#i-annot"/></svg><span>Annotation 1</span></li>
                        <li class="more"><svg class="ico"><use href="#i-operation-s"/></svg><span>OP010 [MACH01]</span></li>
                        <li><svg class="ico"><use href="#i-turnprof"/></svg><span>Turn Profile 1 [Turn Profile]</span></li>
                        <li><svg class="ico"><use href="#i-turnprof"/></svg><span>Turn Profile 2 [Turn Profile]</span></li>
                        <li><svg class="ico"><use href="#i-turnprof"/></svg><span>Turn Profile 3 [Turn Profile]</span></li>
                        <li><svg class="ico"><use href="#i-turnprof"/></svg><span>Turn Profile 4 [Turn Profile]</span></li>
                        <li class="selected"><svg class="ico"><use href="#i-seq"/></svg><span>1. A_H1_MS [OP010]</span></li>
                        <li><svg class="ico"><use href="#i-seq"/></svg><span>2. A_H2_MS [OP010]</span></li>
                        <li><svg class="ico"><use href="#i-seq"/></svg><span>3. D_H1_MS [OP010]</span></li>
                        <li><svg class="ico"><use href="#i-seq"/></svg><span>4. D_H2_MS [OP010]</span></li>
                        <li><svg class="ico"><use href="#i-surf"/></svg><span>Copy 1 [MILL_SURF_1 - MILL SURFACE]</span></li>
                        <li class="more"><svg class="ico"><use href="#i-surf"/></svg><span>Extrude 1 [MILL_SURF_1 - MILL SURFACE]</span></li>
                        <li><svg class="ico"><use href="#i-turnprof"/></svg><span>Turn Profile 5 [Turn Profile]</span></li>
                        <li class="more"><svg class="ico"><use href="#i-seq"/></svg><span>5. Classic Area Turning [OP010]</span></li>
                        <li><svg class="ico"><use href="#i-surf"/></svg><span>Copy 2 [MILL_SURF_2 - MILL SURFACE]</span></li>
                        <li class="more"><svg class="ico"><use href="#i-surf"/></svg><span>Extrude 2 [MILL_SURF_2 - MILL SURFACE]</span></li>
                        <li class="more"><svg class="ico"><use href="#i-seq"/></svg><span>6. SCH1_MS [OP010]</span></li>
                        <li><svg class="ico"><use href="#i-surf"/></svg><span>Copy 3 [MILL_SURF_3 - MILL SURFACE]</span></li>
                        <li class="more"><svg class="ico"><use href="#i-surf"/></svg><span>Extrude 3 [MILL_SURF_3 - MILL SURFACE]</span></li>
                        <li class="more"><svg class="ico"><use href="#i-seq"/></svg><span>7. SCH2_MS [OP010]</span></li>
                        <li><svg class="ico"><use href="#i-turnprof"/></svg><span>Turn Profile 6 [Turn Profile]</span></li>
                        <li class="more"><svg class="ico"><use href="#i-seq"/></svg><span>8. H3_SP [OP010]</span></li>
                        <li><svg class="ico"><use href="#i-turnprof"/></svg><span>Turn Profile 7 [Turn Profile]</span></li>
                        <li><svg class="ico"><use href="#i-turnprof"/></svg><span>Turn Profile 8 [Turn Profile]</span></li>
                        <li><svg class="ico"><use href="#i-turnprof"/></svg><span>Turn Profile 9 [Turn Profile]</span></li>
                    </ul>
                </div>
                <div class="vscroll">
                    <button class="up" aria-label="Scroll up"></button>
                    <div class="thumb"></div>
                    <button class="down" aria-label="Scroll down"></button>
                </div>
                <div class="hscroll">
                    <button class="left" aria-label="Scroll left"></button>
                    <div class="thumb"></div>
                    <button class="right" aria-label="Scroll right"></button>
                </div>
            </div>
        </aside>

        <section class="graphics">
            <div class="view-tools">
                <button aria-label="Refit"><svg class="ico"><use href="#i-zoomfit"/></svg></button>
                <button aria-label="Zoom In"><svg class="ico"><use href="#i-zoomin"/></svg></button>
                <button aria-label="Zoom Out"><svg class="ico"><use href="#i-zoomout"/></svg></button>
                <button aria-label="Repaint"><svg class="ico"><use href="#i-repaint"/></svg></button>
                <button class="menu" aria-label="Display Style"><svg class="ico"><use href="#i-display"/></svg></button>
                <button class="menu" aria-label="Saved Orientations"><svg class="ico"><use href="#i-orient"/></svg></button>
                <button aria-label="View Manager"><svg class="ico"><use href="#i-views"/></svg></button>
                <button class="menu" aria-label="Datum Display"><svg class="ico"><use href="#i-datum"/></svg></button>
                <button aria-label="Annotation Display"><svg class="ico"><use href="#i-annodisp"/></svg></button>
                <button aria-label="Section"><svg class="ico"><use href="#i-section"/></svg></button>
                <button class="on" aria-label="Spin Center"><svg class="ico"><use href="#i-spin"/></svg></button>
            </div>

            <svg class="model" viewBox="283 162 1637 880">
                <defs>
                    <linearGradient id="chuck1" gradientUnits="userSpaceOnUse" x1="0" y1="303" x2="0" y2="983">
                        <stop offset="0" stop-color="#a46600"/><stop offset=".07" stop-color="#c07800"/><stop offset=".2" stop-color="#d28300"/><stop offset=".29" stop-color="#dc8d00"/><stop offset=".35" stop-color="#f8a200"/><stop offset=".39" stop-color="#ffaa00"/><stop offset=".44" stop-color="#f7a100"/><stop offset=".52" stop-color="#d98b00"/><stop offset=".6" stop-color="#c47c00"/><stop offset=".72" stop-color="#a96a00"/><stop offset=".82" stop-color="#8a5600"/><stop offset=".91" stop-color="#6d4500"/><stop offset="1" stop-color="#6b4200"/>
                    </linearGradient>
                    <linearGradient id="chuck2" gradientUnits="userSpaceOnUse" x1="0" y1="303" x2="0" y2="983">
                        <stop offset="0" stop-color="#665000"/><stop offset=".07" stop-color="#7c6000"/><stop offset=".2" stop-color="#856800"/><stop offset=".29" stop-color="#91740c"/><stop offset=".38" stop-color="#b0911c"/><stop offset=".42" stop-color="#ac8c1b"/><stop offset=".52" stop-color="#8c6d08"/><stop offset=".58" stop-color="#7b5e00"/><stop offset=".72" stop-color="#665000"/><stop offset=".87" stop-color="#493800"/><stop offset=".94" stop-color="#382b00"/><stop offset="1" stop-color="#362900"/>
                    </linearGradient>
                    <linearGradient id="stock1" gradientUnits="userSpaceOnUse" x1="0" y1="445" x2="0" y2="841">
                        <stop offset="0" stop-color="#488158"/><stop offset=".2" stop-color="#4b915b"/><stop offset=".4" stop-color="#52a066"/><stop offset=".55" stop-color="#509b63"/><stop offset=".8" stop-color="#4a8958"/><stop offset="1" stop-color="#487352"/>
                    </linearGradient>
                    <linearGradient id="stock2" gradientUnits="userSpaceOnUse" x1="0" y1="484" x2="0" y2="797">
                        <stop offset="0" stop-color="#7a9b8d"/><stop offset=".4" stop-color="#77b29b"/><stop offset=".6" stop-color="#77ac98"/><stop offset="1" stop-color="#729183"/>
                    </linearGradient>
                    <linearGradient id="green" gradientUnits="userSpaceOnUse" x1="0" y1="485" x2="0" y2="802">
                        <stop offset="0" stop-color="#0a8a13"/><stop offset=".15" stop-color="#0ca317"/><stop offset=".38" stop-color="#10ae1d"/><stop offset=".5" stop-color="#0fa71a"/><stop offset=".7" stop-color="#098b12"/><stop offset=".88" stop-color="#07600d"/><stop offset="1" stop-color="#04490a"/>
                    </linearGradient>
                    <linearGradient id="greenCone" gradientUnits="userSpaceOnUse" x1="0" y1="485" x2="0" y2="802">
                        <stop offset="0" stop-color="#0a6113"/><stop offset=".4" stop-color="#107f1b"/><stop offset=".6" stop-color="#0e7018"/><stop offset="1" stop-color="#044c0a"/>
                    </linearGradient>
                    <linearGradient id="greenTip" gradientUnits="userSpaceOnUse" x1="0" y1="519" x2="0" y2="768">
                        <stop offset="0" stop-color="#0c7416"/><stop offset=".45" stop-color="#11961f"/><stop offset=".6" stop-color="#0d8118"/><stop offset="1" stop-color="#05550c"/>
                    </linearGradient>
                    <linearGradient id="red" gradientUnits="userSpaceOnUse" x1="0" y1="484" x2="0" y2="802">
                        <stop offset="0" stop-color="#8a0a0a"/><stop offset=".08" stop-color="#b00000"/><stop offset=".24" stop-color="#d20000"/><stop offset=".4" stop-color="#dd0006"/><stop offset=".55" stop-color="#c60000"/><stop offset=".75" stop-color="#980000"/><stop offset=".95" stop-color="#5c0000"/><stop offset="1" stop-color="#560000"/>
                    </linearGradient>
                    <linearGradient id="redCone" gradientUnits="userSpaceOnUse" x1="0" y1="484" x2="0" y2="802">
                        <stop offset="0" stop-color="#4a0000"/><stop offset=".35" stop-color="#7c0000"/><stop offset=".7" stop-color="#580000"/><stop offset="1" stop-color="#6a0000"/>
                    </linearGradient>
                    <linearGradient id="redTip" gradientUnits="userSpaceOnUse" x1="0" y1="519" x2="0" y2="768">
                        <stop offset="0" stop-color="#700000"/><stop offset=".3" stop-color="#a60000"/><stop offset=".75" stop-color="#560000"/><stop offset="1" stop-color="#6a0000"/>
                    </linearGradient>
                    <linearGradient id="rust" gradientUnits="userSpaceOnUse" x1="0" y1="501" x2="0" y2="785">
                        <stop offset="0" stop-color="#772117"/><stop offset=".36" stop-color="#97291e"/><stop offset=".6" stop-color="#7d1f16"/><stop offset=".8" stop-color="#581911"/><stop offset="1" stop-color="#380b07"/>
                    </linearGradient>
                    <linearGradient id="rustCone" gradientUnits="userSpaceOnUse" x1="0" y1="501" x2="0" y2="785">
                        <stop offset="0" stop-color="#3f1c14"/><stop offset=".36" stop-color="#57281c"/><stop offset=".7" stop-color="#3c170f"/><stop offset="1" stop-color="#400f0a"/>
                    </linearGradient>
                    <linearGradient id="jaw1" x2="0" y2="1"><stop offset="0" stop-color="#fda800"/><stop offset=".5" stop-color="#e09000"/><stop offset="1" stop-color="#c47b00"/></linearGradient>
                    <linearGradient id="jaw2" x2="0" y2="1"><stop offset="0" stop-color="#b0901c"/><stop offset="1" stop-color="#7e6105"/></linearGradient>
                </defs>

                <!-- main spindle -->
                <rect x="549" y="445" width="381" height="396" fill="url(#stock1)"/>
                <path d="M929.500 445v396" stroke="#77857c"/>
                <path d="M549 501h29.500v284H549zM597 524h57v238h-57z" fill="url(#green)"/>
                <path d="M578 501l20 23v238l-20 23z" fill="url(#greenCone)"/>
                <path d="M653 484.500h58v317h-58zM739 518.500h114v249H739z" fill="url(#green)"/>
                <path d="M710.500 484.500l29 34v249l-29 34z" fill="url(#greenCone)"/>
                <path d="M852.500 518.500l61 39v171l-61 39z" fill="url(#greenTip)"/>
                <path d="M740 557h112v10H740zM740 571h112v15H740zM740 590h112v14H740zM740 611h112v9H740z" fill="#659e9b"/>
                <path d="M740 704h112v9H740zM740 720h112v7H740zM740 734h112v4H740zM740 695h112v1H740z" fill="#487673"/>
                <path d="M578.500 501v284M597.500 524v238M653.500 484v318M710.500 484v318M739.500 518v250M852.500 518v250M913.500 587v142M740 556.500h112M740 620.500h112M740 694.500h112M740 738.500h112" stroke="#063f0d" fill="none"/>
                <path d="M653 484.500h57.500l29 34h113M653 801.500h57.500l29-34h113l61-39" stroke="#0a4560" fill="none"/>
                <path d="M852.500 518.500l61 39V587" stroke="#a33d1d" fill="none"/>
                <rect x="436" y="303" width="114" height="680" fill="url(#chuck1)"/>
                <path d="M436.500 302v681M549.500 303v680" stroke="#000"/>
                <path d="M550 326h38v4h-38zM589 364h17v4h-17zM607 403h27v4h-27z" fill="#9c6200"/>
                <path d="M550 956h38v4h-38zM589 918h17v4h-17zM607 879h27v4h-27z" fill="#6b4300"/>
                <path d="M549.500 329.500h39v39h18v38h28v41h-85z" fill="#c47d00" stroke="#000"/>
                <path d="M549.500 838.500h85v41h-28v39h-18v38h-39z" fill="#fca600" stroke="#000"/>
                <path d="M588.500 325v5M606.500 364v5M634.500 403v5M588.500 956v5M606.500 918v4M634.500 879v5" stroke="#000"/>
                <g fill="url(#jaw1)" stroke="#000">
                    <rect x="549.500" y="587.500" width="39" height="111"/>
                    <rect x="588.500" y="594.500" width="18" height="97"/>
                    <rect x="606.500" y="601.500" width="28" height="83"/>
                </g>

                <!-- spin center -->
                <path d="M1080.500 643v-26" stroke="#5bdb5b"/>
                <path d="M1080 643.500h26" stroke="#d9444b"/>
                <circle cx="1080" cy="617" r="2" fill="#2fe03a"/>
                <circle cx="1106" cy="643" r="2" fill="#ee3338"/>
                <circle cx="1080" cy="643" r="3" fill="#30f0ff"/>

                <!-- sub spindle -->
                <rect x="1194" y="484" width="181" height="313" fill="url(#stock2)"/>
                <path d="M1213.500 501h85v284h-85zM1317 523h58v240h-58z" fill="url(#rust)"/>
                <path d="M1298.500 501l19 22v240l-19 22z" fill="url(#rustCone)"/>
                <path d="M1213.500 501v284M1298.500 501v284M1317.500 523v240" stroke="#10200f"/>
                <path d="M1213 501.500h85.500l19 22h57M1213 784.500h85.500l19-22h57" fill="none" stroke="#2f50c8"/>
                <path d="M1374.500 484h57v318h-57zM1459 518.500h115v249h-115z" fill="url(#red)"/>
                <path d="M1431.500 484l28 34.500v249l-28 34.500z" fill="url(#redCone)"/>
                <path d="M1573.500 518.500l37 24v201l-37 24z" fill="url(#redTip)"/>
                <path d="M1374.500 484v318M1431.500 484v318M1459.500 518v250M1573.500 518v250" stroke="#280000"/>
                <rect x="1610" y="303" width="115" height="680" fill="url(#chuck2)"/>
                <path d="M1610.500 302v681M1724.500 303v680" stroke="#000"/>
                <path d="M1588 402h22v4h-22zM1566 420h21v3h-21zM1543 453h22v3h-22z" fill="#584500"/>
                <path d="M1588 881h22v3h-22zM1566 864h21v2h-21zM1543 831h22v2h-22z" fill="#473700"/>
                <path d="M1610.500 405.500h-23v17h-22v33h-23v65h68z" fill="#7f6205" stroke="#000"/>
                <path d="M1610.500 765.500h-68v65h23v33h22v17h23z" fill="#b0911d" stroke="#000"/>
                <path d="M1587.500 402v4M1565.500 419v4M1542.500 453v4M1587.500 880v4M1565.500 863v4M1542.500 830v4" stroke="#000"/>
                <g fill="url(#jaw2)" stroke="#000">
                    <rect x="1542.500" y="609.500" width="23" height="67"/>
                    <rect x="1565.500" y="604.500" width="22" height="77"/>
                    <rect x="1587.500" y="601.500" width="23" height="83"/>
                </g>
            </svg>
        </section>
    </main>

    <footer class="status">
        <button class="on" aria-label="Toggle tree"><svg class="ico"><use href="#i-panel"/></svg></button>
        <button aria-label="Browser"><svg class="ico"><use href="#i-globe"/></svg></button>
        <button aria-label="Full screen"><svg class="ico"><use href="#i-box"/></svg></button>
        <hr>
        <p class="message"><svg class="ico"><use href="#i-warn"/></svg>Cut motion tool path for feature id&nbsp; 771 does not exist in tph. Please compute tool path to highlight.</p>
        <div class="find">
            <button class="find-btn" aria-label="Find"><svg class="ico"><use href="#i-binoc"/></svg></button>
            <button class="find-drop" aria-label="Find options"><i class="caret"></i></button>
        </div>
        <span class="count">1 selected</span>
        <div class="select-box">
            <select aria-label="Selection filter">
                <option>Geometry</option>
            </select>
        </div>
    </footer>
</body>

</html>
```
FILE: styles.css
```
* {
    box-sizing: border-box;
    margin: 0;
    padding: 0;
}

body {
    display: flex;
    flex-direction: column;
    height: 100vh;
    overflow: hidden;
    background-color: #fff;
    color: #444;
    font-family: "Noto Sans", "Open Sans", sans-serif;
    font-size: 11px;
    line-height: 15px;
}

button {
    border: none;
    background: none;
    color: inherit;
    font: inherit;
}

a {
    color: inherit;
    text-decoration: none;
}

svg {
    display: block;
    flex: none;
}

.sprite {
    position: absolute;
    width: 0;
    height: 0;
}

.ico {
    width: 16px;
    height: 16px;
}

.ico-s {
    width: 12px;
    height: 12px;
}

.caret {
    display: inline-block;
    flex: none;
    border: 4px solid transparent;
    border-top-color: #555;
    border-bottom: none;
    vertical-align: middle;
}

.dim {
    color: #b0b0b0;
}

.dim .caret {
    border-top-color: #999;
}

/* title bar */

.titlebar {
    display: grid;
    grid-template-columns: 1fr auto 1fr;
    align-items: center;
    flex: none;
    height: 28px;
    background-color: #fbfbfb;
}

.quick {
    display: flex;
    align-items: center;
    height: 28px;
}

.quick button {
    display: flex;
    align-items: center;
    margin-right: 8px;
}

.quick .drop {
    margin-right: 0;
}

.quick .drop .caret {
    margin: 0 7px;
}

.logo {
    display: flex;
    align-items: center;
    gap: 4px;
    width: 87px;
    padding-left: 8px;
    font-size: 18px;
    line-height: 24px;
}

.logo span {
    margin-top: -2px;
}

.logo sup {
    font-size: 6px;
    line-height: 6px;
}

.quick .customize {
    height: 22px;
    padding-left: 8px;
    border-left: 2px solid #d5d5d5;
}

.customize .caret {
    border-top-color: #222;
    border-top-width: 5px;
}

.title {
    color: #b4b4b4;
    font-size: 12px;
    font-weight: 400;
}

.window-btns {
    display: flex;
    justify-content: flex-end;
    gap: 15px;
    padding-right: 10px;
}

/* tabs */

.tabs {
    display: flex;
    flex: none;
    height: 27px;
    background-color: #40454b;
    color: #fff;
    font-size: 12px;
    line-height: 29px;
}

.tabs a {
    padding: 0 24px;
}

.tabs a.file {
    padding: 0 20px;
    background: linear-gradient(#64c43c, #4aa732);
}

.tabs a.active {
    padding: 0 23px;
    background-color: #fff;
    color: #3d8426;
}

.tab-tools {
    display: flex;
    align-items: center;
    gap: 12px;
    height: 24px;
    margin-left: auto;
    padding-right: 8px;
}

.tab-tools .learn {
    display: flex;
    align-items: center;
    gap: 8px;
}

.tab-tools .caret {
    border-top-color: #fff;
}

.tab-tools .help {
    font-size: 14px;
    font-weight: 700;
}

/* ribbon */

.ribbon {
    display: flex;
    flex: none;
    height: 107px;
    border-bottom: 1px solid #b5b9bb;
}

.group {
    display: flex;
    flex-direction: column;
    height: 104px;
    border-right: 1px solid #c4c4c4;
    margin-top: 1px;
}

.cols {
    display: grid;
    height: 84px;
}

.operate .cols {
    grid-template-columns: 73px 75px;
}

.edit .cols {
    grid-template-columns: 91px;
    padding-left: 7px;
}

.datum .cols {
    grid-template-columns: 46px 126px 41px 4px;
}

.components .cols {
    grid-template-columns: 66px 58px 67px;
    padding-right: 7px;
}

.components .stack {
    padding-left: 6px;
}

.setup .cols {
    grid-template-columns: 61px 40px;
    padding: 0 17px 0 7px;
}

.process .cols {
    grid-template-columns: 62px 119px;
    padding-left: 4px;
}

.process .stack {
    padding-left: 2px;
}

.geometry .cols {
    grid-template-columns: 59px 92px 102px;
    padding-right: 7px;
}

.validate .cols {
    grid-template-columns: 62px;
}

.output .cols {
    grid-template-columns: 48px 48px;
    padding-left: 6px;
}

.big {
    display: flex;
    flex-direction: column;
    align-items: center;
    padding-top: 4px;
    text-align: center;
    white-space: nowrap;
}

.big svg {
    width: 32px;
    height: 32px;
    margin-bottom: 10px;
}

.big span {
    line-height: 14px;
}

.big .caret {
    margin-left: 4px;
}

.code {
    font-family: "Liberation Mono", monospace;
    font-size: 8px;
    fill: #333;
}

.stack {
    display: grid;
    grid-template-rows: 27px 27px 26px;
    align-content: start;
}

.small {
    display: flex;
    align-items: center;
    gap: 4px;
    height: 25px;
    white-space: nowrap;
}

.small .caret {
    margin-left: 4px;
}

.group-name {
    text-align: center;
    white-space: nowrap;
    line-height: 20px;
}

.group-name .caret {
    margin-left: 3px;
}

/* model tree */

main {
    display: flex;
    flex: 1;
    min-height: 0;
}

.sidebar {
    display: flex;
    flex-direction: column;
    flex: none;
    width: 283px;
    border-right: 3px solid #e6e7e9;
}

.side-tabs {
    display: flex;
    flex: none;
    height: 26px;
    background-color: #e6eaeb;
}

.side-tabs button {
    width: 32px;
    padding-left: 7px;
}

.side-tabs .active {
    background-color: #fff;
    padding-left: 10px;
}

.side-tools {
    display: flex;
    align-items: center;
    flex: none;
    height: 32px;
    padding: 0 5px 0 11px;
}

.side-tools button {
    display: flex;
    align-items: center;
    justify-content: center;
    width: 24px;
    height: 24px;
}

.side-tools .kind {
    justify-content: flex-start;
    margin-right: 14px;
    border-right: 2px dotted #999;
}

.side-tools .on,
.status .on {
    border: 1px solid #b0b0b0;
    background-color: #dcdcdc;
}

.side-tools hr {
    height: 24px;
    margin: 0 4px;
    border: none;
    border-left: 1px solid #ccc;
}

.side-tools .last {
    margin-left: auto;
}

.filter {
    display: flex;
    align-items: center;
    flex: none;
    height: 26px;
    padding-left: 12px;
}

.filter-box {
    display: flex;
    align-items: center;
    width: 200px;
    height: 27px;
    margin-left: 4px;
    border: 1px solid #ababab;
}

.filter-box input {
    flex: 1;
    min-width: 0;
    height: 24px;
    padding: 0 4px;
    border: none;
    outline: none;
    font: inherit;
}

.filter-box svg {
    width: 8px;
    height: 8px;
    margin-right: 5px;
}

.filter-drop {
    width: 20px;
}

.filter-add {
    margin-left: 5px;
}

.filter-add svg {
    width: 11px;
    height: 11px;
}

.tree-area {
    display: grid;
    grid-template-columns: 1fr 14px;
    grid-template-rows: 1fr 15px;
    flex: 1;
    min-height: 0;
    margin: 5px 5px 6px 8px;
}

.tree {
    overflow: hidden;
    font-family: "Open Sans", "Noto Sans", sans-serif;
    white-space: nowrap;
}

.root {
    display: flex;
    align-items: center;
    gap: 4px;
    height: 18px;
    padding-left: 4px;
}

.tree ul {
    padding-left: 9px;
    background: linear-gradient(#ccc, #ccc) 11px 0 / 1px 100% no-repeat;
    list-style: none;
}

.tree li {
    display: flex;
    align-items: center;
    height: 18px;
}

.tree li::before {
    content: "";
    width: 9px;
    height: 1px;
    margin: 0 2px 0 3px;
    background-color: #ccc;
}

.tree li.more::before {
    width: 0;
    height: 0;
    margin: 0 10px 0 0;
    border: 4px solid transparent;
    border-left-color: #555;
    border-right: none;
    background: none;
}

.tree li span {
    margin-left: 3px;
    padding-left: 1px;
}

.tree li.no-icon span {
    margin-left: 0;
}

.tree .selected span {
    padding-right: 2px;
    background-color: #aee0fc;
    line-height: 17px;
}

.vscroll,
.hscroll {
    display: flex;
    background-color: #dfdfe1;
}

.vscroll {
    flex-direction: column;
}

.thumb,
.vscroll button,
.hscroll button {
    border: 1px solid #c3c3c3;
    background-color: #f6f6f6;
}

.vscroll button {
    height: 15px;
}

.hscroll button {
    width: 15px;
}

.vscroll .thumb {
    height: 75%;
    margin-bottom: auto;
}

.hscroll .thumb {
    flex: 1;
}

.vscroll button::after,
.hscroll button::after {
    content: "";
    display: block;
    width: 0;
    margin: 0 auto;
    border: 4px solid transparent;
}

.vscroll .up::after {
    border-top: none;
    border-bottom-color: #888;
}

.vscroll .down::after {
    border-bottom: none;
    border-top-color: #888;
}

.hscroll .left::after {
    border-left: none;
    border-right-color: #888;
}

.hscroll .right::after {
    border-right: none;
    border-left-color: #888;
}

/* graphics area */

.graphics {
    position: relative;
    flex: 1;
    min-width: 0;
}

.model {
    width: 100%;
    height: 100%;
}

.view-tools {
    position: absolute;
    top: 7px;
    left: 50%;
    display: flex;
    padding: 3px 2px;
    border: 1px solid #b5b9bb;
    background-color: #fff;
    transform: translateX(-50%);
}

.view-tools button {
    display: flex;
    align-items: center;
    justify-content: center;
    width: 26px;
    height: 24px;
    border: 1px solid transparent;
}

.view-tools .on {
    width: 24px;
    margin: 0 1px;
    border-color: #b0b0b0;
    background-color: #dfe0e2;
}

.view-tools .menu::after {
    content: "";
    align-self: flex-end;
    margin-right: -3px;
    border-bottom: 3px solid #333;
    border-left: 3px solid transparent;
}

/* status bar */

.status {
    display: flex;
    align-items: center;
    flex: none;
    height: 38px;
    padding: 0 18px 0 6px;
    border-top: 1px solid #b5b9bb;
}

.status button {
    display: flex;
    align-items: center;
    justify-content: center;
    width: 22px;
    height: 24px;
    margin: 4px 4px 0 0;
}

.status hr {
    height: 24px;
    margin: 0 2px 0 5px;
    border: none;
    border-left: 1px solid #ccc;
}

.message {
    display: flex;
    align-items: center;
    margin-bottom: 6px;
}

.find {
    display: flex;
    align-items: center;
    height: 30px;
    margin-left: auto;
    padding: 0 2px;
    border-right: 1px solid #ccc;
    border-left: 6px double #ccc;
}

.status .find button {
    height: 24px;
    margin: 0;
    border: 1px solid #ccc;
}

.status .find .find-btn {
    width: 28px;
}

.status .find .find-drop {
    width: 15px;
    border-left: none;
}

.count {
    width: 90px;
    padding-left: 5px;
}

.select-box {
    position: relative;
    width: 165px;
    height: 23px;
}

.select-box select {
    width: 100%;
    height: 100%;
    padding-left: 8px;
    border: 1px solid #ababab;
    border-radius: 0;
    background-color: #f6f6f6;
    color: inherit;
    font: inherit;
    appearance: none;
}

.select-box::after {
    content: "";
    position: absolute;
    top: 9px;
    right: 4px;
    border: 4px solid transparent;
    border-top-color: #555;
    border-bottom: none;
    pointer-events: none;
}

.select-box::before {
    content: "";
    position: absolute;
    top: 1px;
    right: 15px;
    bottom: 1px;
    border-left: 1px solid #ababab;
}
```
